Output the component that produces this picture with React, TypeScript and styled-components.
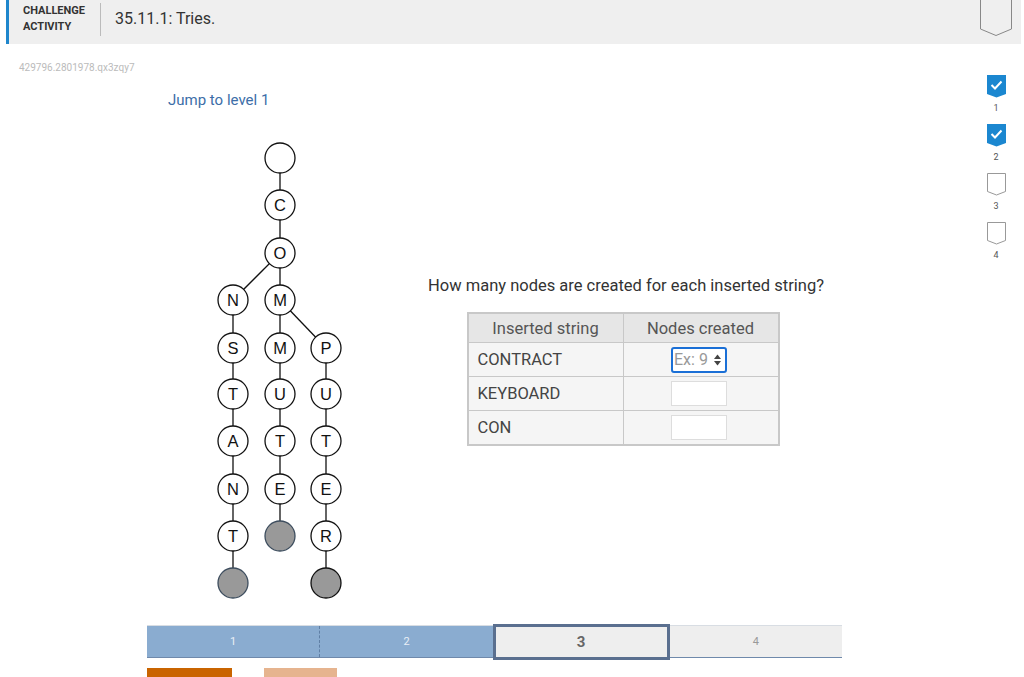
import { FunctionComponent } from "react";
import styled, { createGlobalStyle } from "styled-components";

const GlobalStyle = createGlobalStyle`
  body {
    margin: 0;
    background: #fff;
    font-family: Roboto, "Noto Sans", "Liberation Sans", sans-serif;
    color: #333;
  }
`;

const Page = styled.div`
  width: 1024px;
  height: 677px;
  overflow: hidden;
  display: flex;
  flex-direction: column;
`;

const Header = styled.header`
  height: 44px;
  margin: 0 3px 0 6px;
  padding: 0 8px 8px 14px;
  box-sizing: border-box;
  background: #efefef;
  border-left: 3px solid #1f86cc;
  display: flex;
  align-items: center;
`;

const ActivityLabel = styled.div`
  font-size: 11px;
  font-weight: 700;
  line-height: 16px;
  color: #333;
  padding-right: 15px;
  border-right: 1px solid #bbb;
  height: 33px;
  box-sizing: border-box;
  margin-top: 2px;
`;

const Title = styled.h1`
  margin: 0 0 0 14px;
  font-size: 16px;
  font-weight: 400;
  color: #333;
  flex: 1;
`;

const HeaderBookmark = styled.svg`
  width: 34px;
  height: 38px;
  align-self: flex-start;
  margin-top: -1px;
`;

const Body = styled.div`
  flex: 1;
  display: flex;
`;

const Main = styled.main`
  flex: 1;
  padding-top: 18px;
`;

const ActivityId = styled.div`
  font-size: 10px;
  line-height: 12px;
  color: #bbb;
  padding-left: 19px;
`;

const Activity = styled.div`
  margin-left: 147px;
  width: 695px;
`;

const JumpLink = styled.a`
  display: block;
  margin: 16px 0 0 21px;
  font-size: 15px;
  line-height: 20px;
  color: #3c6ea8;
  text-decoration: none;
  cursor: pointer;
`;

const Workspace = styled.div`
  display: flex;
  margin-top: 30px;
  height: 460px;
`;

const Tree = styled.svg`
  width: 220px;
  height: 460px;
  flex-shrink: 0;
`;

const QuestionColumn = styled.div`
  margin-left: 56px;
  width: 400px;
  padding-top: 136px;
  display: flex;
  flex-direction: column;
  align-items: center;
`;

const Question = styled.p`
  margin: 0 0 0 6px;
  font-size: 16.5px;
  line-height: 20px;
  color: #333;
  white-space: nowrap;
`;

const Table = styled.table`
  margin-top: 16px;
  width: 313px;
  border-collapse: collapse;
  border: 2px solid #c8c8c8;
  font-size: 16.5px;
  color: #444;
`;

const HeadCell = styled.th`
  height: 28px;
  width: 50%;
  padding: 0;
  background: #e6e6e6;
  font-weight: 400;
  border: 1px solid #c8c8c8;
  color: #555;
`;

const Cell = styled.td<{ $center?: boolean }>`
  height: 33px;
  padding: ${(p) => (p.$center ? "0 3px 0 0" : "0 0 0 9px")};
  background: #f5f5f5;
  border: 1px solid #c8c8c8;
  text-align: ${(p) => (p.$center ? "center" : "left")};
`;

const AnswerBox = styled.label<{ $focused?: boolean }>`
  display: inline-flex;
  align-items: center;
  vertical-align: middle;
  width: 56px;
  height: ${(p) => (p.$focused ? "26px" : "25px")};
  box-sizing: border-box;
  background: #fff;
  border: ${(p) => (p.$focused ? "2px solid #1a6fd6" : "1px solid #ddd")};
  border-radius: ${(p) => (p.$focused ? "3px" : "0")};
`;

const AnswerInput = styled.input`
  width: 100%;
  min-width: 0;
  border: none;
  outline: none;
  background: transparent;
  padding: 0 0 0 1px;
  font-family: inherit;
  font-size: 16px;
  color: #333;
  &::placeholder {
    color: #999;
  }
`;

const Spinner = styled.svg`
  width: 9px;
  height: 14px;
  margin-right: 3px;
  flex-shrink: 0;
`;

const Progress = styled.div`
  display: flex;
  margin-top: 25px;
  height: 33px;
  border-top: 1px solid #d8dde3;
  border-bottom: 1px solid #6f89ab;
  box-sizing: border-box;
`;

const Segment = styled.div<{ $done?: boolean; $current?: boolean; $divider?: boolean }>`
  flex: 1;
  display: flex;
  align-items: center;
  justify-content: center;
  box-sizing: border-box;
  background: ${(p) => (p.$done ? "#8aacd0" : "#eeeeee")};
  color: ${(p) => (p.$done ? "#e9eff6" : p.$current ? "#666" : "#999")};
  font-size: ${(p) => (p.$current ? "15px" : "11px")};
  font-weight: ${(p) => (p.$current ? 700 : 400)};
  border-right: ${(p) => (p.$divider ? "1px dashed #5f7fa5" : "none")};
  ${(p) =>
    p.$current &&
    `
    border: 3px solid #5a6f8f;
    margin: -2px 0;
    height: 36px;
    flex: 0 0 177px;
  `}
`;

const Buttons = styled.div`
  display: flex;
  gap: 32px;
  margin-top: 10px;
`;

const ActionButton = styled.button<{ $light?: boolean }>`
  width: ${(p) => (p.$light ? "73px" : "85px")};
  height: 30px;
  border: none;
  padding: 0;
  background: ${(p) => (p.$light ? "#e6b48f" : "#c96400")};
`;

const Sidebar = styled.aside`
  width: 56px;
  padding-top: 31px;
  display: flex;
  flex-direction: column;
  align-items: center;
  gap: 9px;
`;

const LevelMark = styled.div`
  display: flex;
  flex-direction: column;
  align-items: center;
  gap: 3px;
`;

const LevelNumber = styled.span`
  font-size: 9px;
  line-height: 14px;
  color: #555;
`;

type Node = { x: number; y: number; label?: string; end?: boolean; edge?: string };

const cols = { l: 86, m: 133, r: 179 };
const rows = [18, 65, 113, 160, 208, 254, 301, 349, 396, 443];

const nodes: Record<string, Node> = {
  root: { x: cols.m, y: rows[0] },
  c: { x: cols.m, y: rows[1], label: "C", edge: "root" },
  o: { x: cols.m, y: rows[2], label: "O", edge: "c" },
  n1: { x: cols.l, y: rows[3], label: "N", edge: "o" },
  s: { x: cols.l, y: rows[4], label: "S", edge: "n1" },
  t1: { x: cols.l, y: rows[5], label: "T", edge: "s" },
  a: { x: cols.l, y: rows[6], label: "A", edge: "t1" },
  n2: { x: cols.l, y: rows[7], label: "N", edge: "a" },
  t2: { x: cols.l, y: rows[8], label: "T", edge: "n2" },
  e1: { x: cols.l, y: rows[9], end: true, edge: "t2" },
  m1: { x: cols.m, y: rows[3], label: "M", edge: "o" },
  m2: { x: cols.m, y: rows[4], label: "M", edge: "m1" },
  u1: { x: cols.m, y: rows[5], label: "U", edge: "m2" },
  t3: { x: cols.m, y: rows[6], label: "T", edge: "u1" },
  e2: { x: cols.m, y: rows[7], label: "E", edge: "t3" },
  end2: { x: cols.m, y: rows[8], end: true, edge: "e2" },
  p: { x: cols.r, y: rows[4], label: "P", edge: "m1" },
  u2: { x: cols.r, y: rows[5], label: "U", edge: "p" },
  t4: { x: cols.r, y: rows[6], label: "T", edge: "u2" },
  e3: { x: cols.r, y: rows[7], label: "E", edge: "t4" },
  r: { x: cols.r, y: rows[8], label: "R", edge: "e3" },
  end3: { x: cols.r, y: rows[9], end: true, edge: "r" },
};

const TrieDiagram: FunctionComponent = () => {
  const list = Object.values(nodes);
  return (
    <Tree viewBox="0 0 220 460">
      {list.map((n, i) =>
        n.edge ? (
          <line
            key={`e${i}`}
            x1={nodes[n.edge].x}
            y1={nodes[n.edge].y}
            x2={n.x}
            y2={n.y}
            stroke="#111"
            strokeWidth={1.3}
          />
        ) : null
      )}
      {list.map((n, i) => (
        <g key={`n${i}`}>
          <circle
            cx={n.x}
            cy={n.y}
            r={15}
            fill={n.end ? "#999" : "#fff"}
            stroke={n.end && n.x !== cols.r ? "#3d4d5e" : "#111"}
            strokeWidth={1.3}
          />
          {n.label && (
            <text
              x={n.x}
              y={n.y + 6}
              textAnchor="middle"
              fontSize="16.5"
              fontFamily='"Liberation Sans", Arial, sans-serif'
              fill="#111"
            >
              {n.label}
            </text>
          )}
        </g>
      ))}
    </Tree>
  );
};

const Bookmark: FunctionComponent<{ checked: boolean }> = ({ checked }) => (
  <svg width="19" height="23" viewBox="0 0 19 23">
    {checked ? (
      <>
        <path d="M0 0 H19 V19 L9.5 22.5 L0 19 Z" fill="#1b87d0" />
        <path d="M4.5 10 L8 13.5 L14.5 6.5" fill="none" stroke="#fff" strokeWidth="2" />
      </>
    ) : (
      <path d="M0.5 0.5 H18.5 V18.5 L9.5 22 L0.5 18.5 Z" fill="#fff" stroke="#999" strokeWidth="1" />
    )}
  </svg>
);

const levels = [true, true, false, false];

export default function App() {
  return (
    <Page>
      <GlobalStyle />
      <Header>
        <ActivityLabel>
          CHALLENGE
          <br />
          ACTIVITY
        </ActivityLabel>
        <Title>35.11.1: Tries.</Title>
        <HeaderBookmark viewBox="0 0 34 38">
          <path d="M1.5 0 V30 L17 36.5 L32.5 30 V0" fill="none" stroke="#888" strokeWidth="1" />
        </HeaderBookmark>
      </Header>
      <Body>
        <Main>
          <ActivityId>429796.2801978.qx3zqy7</ActivityId>
          <Activity>
            <JumpLink>Jump to level 1</JumpLink>
            <Workspace>
              <TrieDiagram />
              <QuestionColumn>
                <Question>How many nodes are created for each inserted string?</Question>
                <Table>
                  <thead>
                    <tr>
                      <HeadCell>Inserted string</HeadCell>
                      <HeadCell>Nodes created</HeadCell>
                    </tr>
                  </thead>
                  <tbody>
                    <tr>
                      <Cell>CONTRACT</Cell>
                      <Cell $center>
                        <AnswerBox $focused>
                          <AnswerInput placeholder="Ex: 9" />
                          <Spinner viewBox="0 0 9 14">
                            <path d="M1 6 L4.5 1.5 L8 6 Z" fill="#444" />
                            <path d="M1 8 L4.5 12.5 L8 8 Z" fill="#444" />
                          </Spinner>
                        </AnswerBox>
                      </Cell>
                    </tr>
                    <tr>
                      <Cell>KEYBOARD</Cell>
                      <Cell $center>
                        <AnswerBox>
                          <AnswerInput />
                        </AnswerBox>
                      </Cell>
                    </tr>
                    <tr>
                      <Cell>CON</Cell>
                      <Cell $center>
                        <AnswerBox>
                          <AnswerInput />
                        </AnswerBox>
                      </Cell>
                    </tr>
                  </tbody>
                </Table>
              </QuestionColumn>
            </Workspace>
            <Progress>
              <Segment $done $divider>1</Segment>
              <Segment $done>2</Segment>
              <Segment $current>3</Segment>
              <Segment>4</Segment>
            </Progress>
            <Buttons>
              <ActionButton />
              <ActionButton $light />
            </Buttons>
          </Activity>
        </Main>
        <Sidebar>
          {levels.map((done, i) => (
            <LevelMark key={i}>
              <Bookmark checked={done} />
              <LevelNumber>{i + 1}</LevelNumber>
            </LevelMark>
          ))}
        </Sidebar>
      </Body>
    </Page>
  );
}
